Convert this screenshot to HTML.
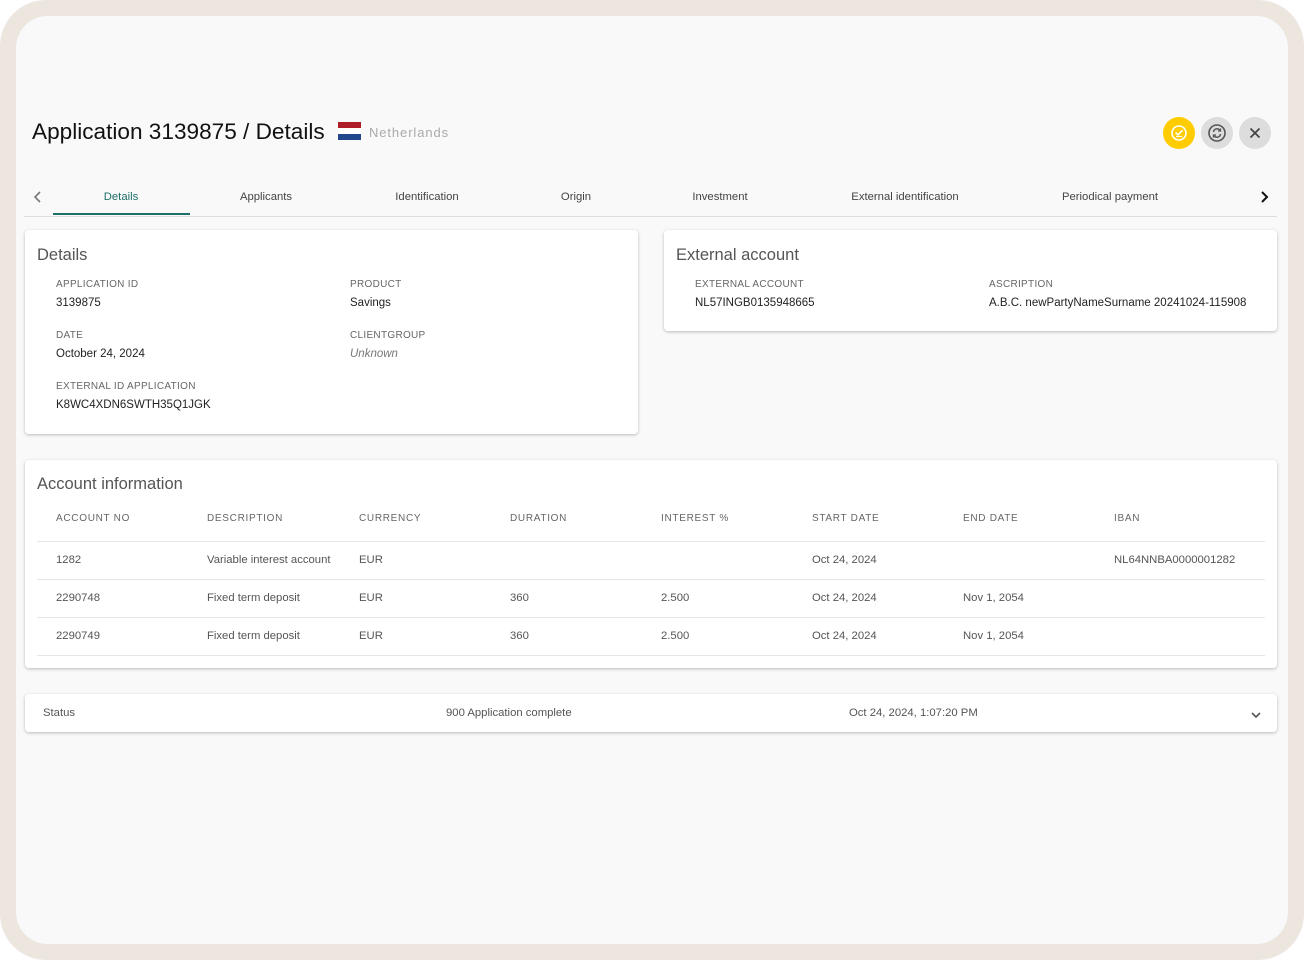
<!DOCTYPE html>
<html><head><meta charset="utf-8"><style>
*{margin:0;padding:0;box-sizing:border-box}
body{width:1304px;height:960px;background:#fff;font-family:"Liberation Sans",Arial,sans-serif;position:relative;overflow:hidden}
.frame{position:absolute;left:0;top:0;width:1304px;height:960px;background:#ede6df;border-radius:46px}
.inner{position:absolute;left:16px;top:16px;width:1272px;height:928px;background:#f9f9f9;border-radius:32px;overflow:hidden}
.a{position:absolute;white-space:nowrap}
.card{position:absolute;background:#fff;border-radius:4px;box-shadow:0 1px 3px rgba(0,0,0,.25)}
.lbl{font-size:10px;color:#666;letter-spacing:.3px}
.val{font-size:11.5px;color:#222}
.th{font-size:10px;color:#666;letter-spacing:.7px}
.td{font-size:11.3px;color:#555}
.tab{font-size:11.3px;color:#444;position:absolute;top:191px;transform:translateX(-50%)}
.line{position:absolute;left:37px;width:1228px;height:1px;background:#e6e6e6}
.btn{position:absolute;top:117px;width:32px;height:32px;border-radius:50%}
</style></head><body>
<div class="frame"></div>
<div class="inner"></div>
<div class="a" style="left:32px;top:119px;font-size:22.6px;color:#111">Application 3139875 / Details</div>
<div class="a" style="left:338px;top:122px;width:23px;height:18px">
<div style="height:6px;background:#ae1c28"></div><div style="height:6px;background:#fff"></div><div style="height:6px;background:#21468b"></div></div>
<div class="a" style="left:369px;top:125px;font-size:13px;color:#aaa;letter-spacing:.9px">Netherlands</div>
<div class="btn" style="left:1163px;background:#ffcc00"><svg width="32" height="32" viewBox="0 0 32 32"><circle cx="16" cy="16" r="7" fill="none" stroke="#fff" stroke-width="1.6"/><path d="M12.5 15.5l2.5 2.3 4.5-4.5" fill="none" stroke="#fff" stroke-width="1.6"/><path d="M13 19.5h6" stroke="#fff" stroke-width="1.2"/></svg></div>
<div class="btn" style="left:1201px;background:#ddd"><svg width="32" height="32" viewBox="0 0 32 32"><circle cx="16" cy="16" r="8" fill="none" stroke="#555" stroke-width="1.6"/><path d="M12.5 15a3.5 3.5 0 0 1 6.3-1.8M19.5 17a3.5 3.5 0 0 1-6.3 1.8" fill="none" stroke="#555" stroke-width="1.5"/><path d="M19.5 11.5v2.5h-2.5M12.5 20.5v-2.5h2.5" fill="none" stroke="#555" stroke-width="1.3"/></svg></div>
<div class="btn" style="left:1239px;background:#ddd"><svg width="32" height="32" viewBox="0 0 32 32"><path d="M11.5 11.5l9 9M20.5 11.5l-9 9" stroke="#444" stroke-width="1.7"/></svg></div>
<svg class="a" style="left:32px;top:190px" width="12" height="14" viewBox="0 0 12 14"><path d="M8 2L3 7l5 5" fill="none" stroke="#777" stroke-width="1.6"/></svg>
<svg class="a" style="left:1258px;top:190px" width="12" height="14" viewBox="0 0 12 14"><path d="M4 2l5 5-5 5" fill="none" stroke="#111" stroke-width="2"/></svg>
<div class="tab" style="left:121px;color:#1f6e6a">Details</div>
<div class="a" style="left:53px;top:213px;width:137px;height:2px;background:#1f6e6a"></div>
<div class="tab" style="left:266px">Applicants</div>
<div class="tab" style="left:427px">Identification</div>
<div class="tab" style="left:576px">Origin</div>
<div class="tab" style="left:720px">Investment</div>
<div class="tab" style="left:905px">External identification</div>
<div class="tab" style="left:1110px">Periodical payment</div>
<div class="a" style="left:24px;top:216px;width:1253px;height:1px;background:#ddd"></div>

<div class="card" style="left:25px;top:230px;width:613px;height:204px"></div>
<div class="a" style="left:37px;top:246px;font-size:16.5px;color:#555">Details</div>
<div class="a lbl" style="left:56px;top:279px">APPLICATION ID</div>
<div class="a val" style="left:56px;top:297px">3139875</div>
<div class="a lbl" style="left:56px;top:330px">DATE</div>
<div class="a val" style="left:56px;top:348px">October 24, 2024</div>
<div class="a lbl" style="left:56px;top:381px">EXTERNAL ID APPLICATION</div>
<div class="a val" style="left:56px;top:399px">K8WC4XDN6SWTH35Q1JGK</div>
<div class="a lbl" style="left:350px;top:279px">PRODUCT</div>
<div class="a val" style="left:350px;top:297px">Savings</div>
<div class="a lbl" style="left:350px;top:330px">CLIENTGROUP</div>
<div class="a val" style="left:350px;top:348px;font-style:italic;color:#777">Unknown</div>

<div class="card" style="left:664px;top:230px;width:613px;height:101px"></div>
<div class="a" style="left:676px;top:246px;font-size:16.5px;color:#555">External account</div>
<div class="a lbl" style="left:695px;top:279px">EXTERNAL ACCOUNT</div>
<div class="a val" style="left:695px;top:297px">NL57INGB0135948665</div>
<div class="a lbl" style="left:989px;top:279px">ASCRIPTION</div>
<div class="a val" style="left:989px;top:297px">A.B.C. newPartyNameSurname 20241024-115908</div>

<div class="card" style="left:25px;top:460px;width:1252px;height:208px"></div>
<div class="a" style="left:37px;top:475px;font-size:16.5px;color:#555">Account information</div>
<div class="a th" style="left:56px;top:513px">ACCOUNT NO</div>
<div class="a th" style="left:207px;top:513px">DESCRIPTION</div>
<div class="a th" style="left:359px;top:513px">CURRENCY</div>
<div class="a th" style="left:510px;top:513px">DURATION</div>
<div class="a th" style="left:661px;top:513px">INTEREST %</div>
<div class="a th" style="left:812px;top:513px">START DATE</div>
<div class="a th" style="left:963px;top:513px">END DATE</div>
<div class="a th" style="left:1114px;top:513px">IBAN</div>
<div class="line" style="top:541px"></div>
<div class="line" style="top:579px"></div>
<div class="line" style="top:617px"></div>
<div class="line" style="top:655px"></div>
<div class="a td" style="left:56px;top:554px">1282</div>
<div class="a td" style="left:207px;top:554px">Variable interest account</div>
<div class="a td" style="left:359px;top:554px">EUR</div>
<div class="a td" style="left:812px;top:554px">Oct 24, 2024</div>
<div class="a td" style="left:1114px;top:554px">NL64NNBA0000001282</div>
<div class="a td" style="left:56px;top:592px">2290748</div>
<div class="a td" style="left:207px;top:592px">Fixed term deposit</div>
<div class="a td" style="left:359px;top:592px">EUR</div>
<div class="a td" style="left:510px;top:592px">360</div>
<div class="a td" style="left:661px;top:592px">2.500</div>
<div class="a td" style="left:812px;top:592px">Oct 24, 2024</div>
<div class="a td" style="left:963px;top:592px">Nov 1, 2054</div>
<div class="a td" style="left:56px;top:630px">2290749</div>
<div class="a td" style="left:207px;top:630px">Fixed term deposit</div>
<div class="a td" style="left:359px;top:630px">EUR</div>
<div class="a td" style="left:510px;top:630px">360</div>
<div class="a td" style="left:661px;top:630px">2.500</div>
<div class="a td" style="left:812px;top:630px">Oct 24, 2024</div>
<div class="a td" style="left:963px;top:630px">Nov 1, 2054</div>

<div class="card" style="left:25px;top:694px;width:1252px;height:38px"></div>
<div class="a td" style="left:43px;top:707px">Status</div>
<div class="a td" style="left:446px;top:707px">900 Application complete</div>
<div class="a td" style="left:849px;top:707px">Oct 24, 2024, 1:07:20 PM</div>
<svg class="a" style="left:1250px;top:710px" width="12" height="10" viewBox="0 0 12 10"><path d="M2 3l4 4 4-4" fill="none" stroke="#555" stroke-width="1.6"/></svg>
</body></html>
